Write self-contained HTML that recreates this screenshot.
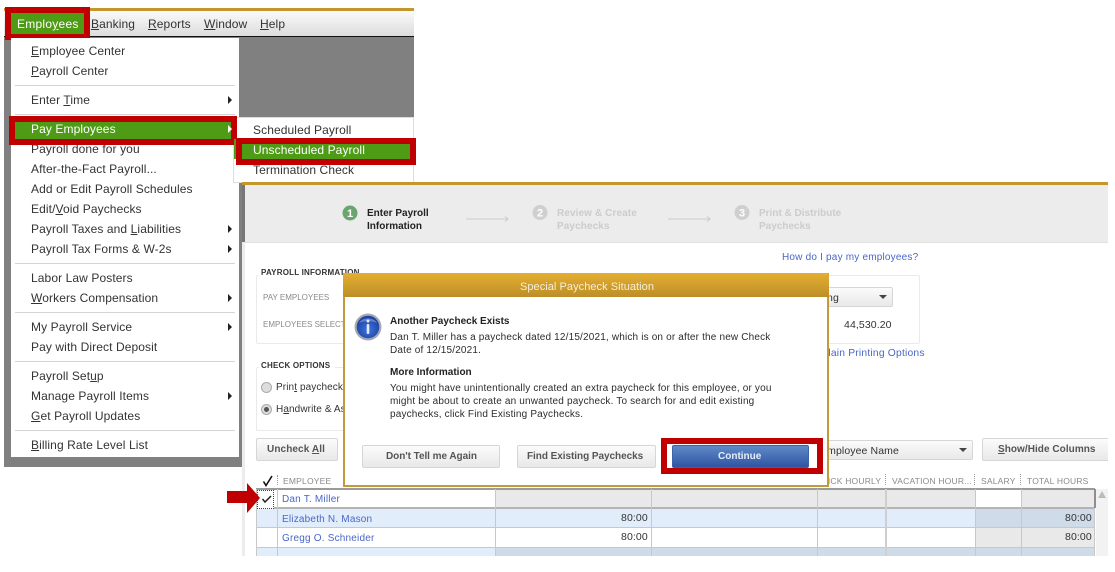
<!DOCTYPE html>
<html><head><meta charset="utf-8">
<style>
html,body{margin:0;padding:0;background:#fff;}
#p{position:relative;width:1115px;height:572px;overflow:hidden;background:#fff;font-family:"Liberation Sans",sans-serif;filter:blur(.3px);}
#p div,#p span.t{position:absolute;}
.t{white-space:nowrap;line-height:14px;transform:translateY(-6px);}
.m{font-size:12px;color:#333;letter-spacing:.1px;left:31px;transform:translateY(-7px);}
.w{color:#fff;}
.h{font-size:8.5px;color:#8a8a8a;letter-spacing:.2px;}
.h2{font-size:8px;color:#8a8a8a;}
.f{font-size:8px;font-weight:bold;color:#333;letter-spacing:.2px;}
.b{font-weight:bold;font-size:10px;color:#222;}
.g{font-weight:bold;font-size:10px;color:#ccc;}
.d{font-size:10px;color:#2c2c2c;letter-spacing:.17px;left:390px;}
.l{font-size:10px;color:#4a66c8;letter-spacing:.2px;}
.n{font-size:10.5px;color:#333;letter-spacing:.1px;}
.o{font-size:10px;color:#333;letter-spacing:.1px;}
.btn{background:linear-gradient(#fbfbfb,#e8e8e8);border:1px solid #d6d6d6;border-radius:2px;box-sizing:border-box;}
.bt{font-weight:bold;font-size:10px;color:#555;letter-spacing:.1px;}
.bd{font-weight:bold;font-size:10px;color:#555;letter-spacing:-.05px;}
.sep{height:1px;background:#d4d4d4;left:15px;width:220px;}
.tri{width:0;height:0;border-left:4px solid #222;border-top:4px solid transparent;border-bottom:4px solid transparent;left:228px;}
.r{background:#c00000;}
.gr{background:#4e9c16;}
</style></head><body><div id="p">

<!-- top window -->
<div style="left:4px;top:8px;width:410px;height:3px;background:#c5962c"></div>
<div style="left:4px;top:11px;width:410px;height:25px;background:linear-gradient(#fafafa,#dcdcdc)"></div>
<div style="left:4px;top:36px;width:410px;height:1px;background:#111"></div>
<div style="left:4px;top:37px;width:410px;height:145px;background:#808080"></div>
<div style="left:4px;top:182px;width:238px;height:285px;background:#808080"></div>

<!-- menu bar -->
<div class="r" style="left:5px;top:7px;width:85px;height:33px"></div>
<div class="gr" style="left:11px;top:13px;width:73px;height:21px"></div>
<span class="t m w" style="left:17px;top:24px;letter-spacing:.25px">Emplo<u>y</u>ees</span>
<span class="t m" style="left:91px;top:24px;letter-spacing:.1px"><u>B</u>anking</span>
<span class="t m" style="left:148px;top:24px;letter-spacing:.1px"><u>R</u>eports</span>
<span class="t m" style="left:204px;top:24px;letter-spacing:.1px"><u>W</u>indow</span>
<span class="t m" style="left:260px;top:24px;letter-spacing:.1px"><u>H</u>elp</span>

<!-- dropdown -->
<div style="left:11px;top:38px;width:228px;height:419px;background:#fff"></div>
<span class="t m" style="top:51px"><u>E</u>mployee Center</span>
<span class="t m" style="top:71px"><u>P</u>ayroll Center</span>
<div class="sep" style="top:85px"></div>
<span class="t m" style="top:100px">Enter <u>T</u>ime</span>
<div class="tri" style="top:96px"></div>
<div class="sep" style="top:114px"></div>
<span class="t m" style="top:149px">Payroll done for you</span>
<span class="t m" style="top:169px">After-the-Fact Payroll...</span>
<span class="t m" style="top:189px">Add or Edit Payroll Schedules</span>
<span class="t m" style="top:209px">Edit/<u>V</u>oid Paychecks</span>
<span class="t m" style="top:229px">Payroll Taxes and <u>L</u>iabilities</span>
<div class="tri" style="top:225px"></div>
<span class="t m" style="top:249px">Payroll Tax Forms &amp; W-2s</span>
<div class="tri" style="top:245px"></div>
<div class="sep" style="top:263px"></div>
<span class="t m" style="top:278px">Labor Law Posters</span>
<span class="t m" style="top:298px"><u>W</u>orkers Compensation</span>
<div class="tri" style="top:294px"></div>
<div class="sep" style="top:312px"></div>
<span class="t m" style="top:327px">My Payroll Service</span>
<div class="tri" style="top:323px"></div>
<span class="t m" style="top:347px">Pay with Direct Deposit</span>
<div class="sep" style="top:361px"></div>
<span class="t m" style="top:376px">Payroll Set<u>u</u>p</span>
<span class="t m" style="top:396px">Manage Payroll Items</span>
<div class="tri" style="top:392px"></div>
<span class="t m" style="top:416px"><u>G</u>et Payroll Updates</span>
<div class="sep" style="top:430px"></div>
<span class="t m" style="top:445px"><u>B</u>illing Rate Level List</span>

<!-- submenu -->
<div style="left:233px;top:117px;width:181px;height:66px;background:#fff;border:1px solid #ddd;box-sizing:border-box"></div>
<span class="t m" style="left:253px;top:130px">Scheduled Payroll</span>
<span class="t m" style="left:253px;top:170px">Termination Check</span>

<!-- highlighted items -->
<div class="r" style="left:9px;top:116px;width:228px;height:29px"></div>
<div class="gr" style="left:15px;top:122px;width:216px;height:17px"></div>
<span class="t m w" style="top:129px">Pay Employees</span>
<div class="tri" style="top:125px;border-left-color:#fff"></div>
<div class="gr" style="left:234px;top:139px;width:6px;height:20px"></div>
<div class="r" style="left:236px;top:138px;width:180px;height:27px"></div>
<div class="gr" style="left:242px;top:144px;width:168px;height:15px"></div>
<span class="t m w" style="left:253px;top:150px">Unscheduled Payroll</span>

<!-- bottom panel -->
<div style="left:242px;top:182px;width:866px;height:374px;background:#fff"></div>
<div style="left:242px;top:182px;width:866px;height:3px;background:#c5962c"></div>
<div style="left:242px;top:185px;width:3px;height:57px;background:#777"></div>
<div style="left:242px;top:242px;width:3px;height:314px;background:#ececec"></div>
<div style="left:245px;top:185px;width:863px;height:57px;background:#ececec"></div>
<div style="left:245px;top:242px;width:863px;height:1px;background:#e0e0e0"></div>

<!-- steps -->
<svg style="position:absolute;left:0;top:0" width="1115" height="572">
<circle cx="350" cy="213" r="7.5" fill="#6ba56e"/>
<circle cx="540" cy="212.500" r="7.500" fill="#cfcfcf"/>
<circle cx="742" cy="212.500" r="7.500" fill="#cfcfcf"/>
<g stroke="#cbcbcb" stroke-width="1" fill="none">
<path d="M466 219H508M505 216.500L508 219L505 221.500"/>
<path d="M668 219H710M707 216.500L710 219L707 221.500"/>
</g>
<text x="350" y="217" font-family="Liberation Sans" font-size="11" font-weight="bold" fill="#fff" text-anchor="middle">1</text>
<text x="540" y="216.500" font-family="Liberation Sans" font-size="11" font-weight="bold" fill="#fff" text-anchor="middle">2</text>
<text x="742" y="216.500" font-family="Liberation Sans" font-size="11" font-weight="bold" fill="#fff" text-anchor="middle">3</text>
</svg>
<span class="t b" style="left:367px;top:213px">Enter Payroll</span>
<span class="t b" style="left:367px;top:226px">Information</span>
<span class="t g" style="left:557px;top:213px;letter-spacing:.1px">Review &amp; Create</span>
<span class="t g" style="left:557px;top:226px;letter-spacing:.1px">Paychecks</span>
<span class="t g" style="left:759px;top:213px">Print &amp; Distribute</span>
<span class="t g" style="left:759px;top:226px">Paychecks</span>

<span class="t l" style="left:782px;top:257px">How do I pay my employees?</span>

<!-- fieldsets -->
<div style="left:256px;top:275px;width:664px;height:69px;border:1px solid #eaeaea;border-radius:2px;box-sizing:border-box"></div>
<div style="left:256px;top:367px;width:400px;height:64px;border:1px solid #eaeaea;border-radius:2px;box-sizing:border-box"></div>
<div style="left:259px;top:268px;width:104px;height:9px;background:#fff"></div>
<span class="t f" style="left:261px;top:272px">PAYROLL INFORMATION</span>
<div style="left:259px;top:361px;width:76px;height:9px;background:#fff"></div>
<span class="t f" style="left:261px;top:365px">CHECK OPTIONS</span>
<span class="t h2" style="left:263px;top:297px">PAY EMPLOYEES</span>
<span class="t h2" style="left:263px;top:324px">EMPLOYEES SELECTED</span>
<div style="left:261px;top:382px;width:9px;height:9px;border-radius:50%;background:#ddd;border:1px solid #aaa"></div>
<div style="left:261px;top:404px;width:9px;height:9px;border-radius:50%;background:#ddd;border:1px solid #aaa"></div>
<div style="left:264px;top:407px;width:5px;height:5px;border-radius:50%;background:#555"></div>
<span class="t o" style="left:276px;top:387px">Prin<u>t</u> paychecks</span>
<span class="t o" style="left:276px;top:409px">H<u>a</u>ndwrite &amp; Assign</span>

<div class="btn" style="left:780px;top:287px;width:113px;height:20px"></div>
<span class="t n" style="left:827px;top:297px">ng</span>
<div style="left:879px;top:295px;width:0;height:0;border-top:4px solid #444;border-left:4px solid transparent;border-right:4px solid transparent"></div>
<span class="t n" style="left:844px;top:324px">44,530.20</span>
<span class="t l" style="left:810px;top:353px;font-size:10.3px">Explain Printing Options</span>

<!-- buttons row -->
<div class="btn" style="left:256px;top:438px;width:82px;height:23px"></div>
<span class="t bt" style="left:267px;top:449px">Uncheck <u>A</u>ll</span>
<div class="btn" style="left:790px;top:440px;width:183px;height:20px"></div>
<span class="t n" style="left:820px;top:449.500px">Employee Name</span>
<div style="left:959px;top:448px;width:0;height:0;border-top:4px solid #444;border-left:4px solid transparent;border-right:4px solid transparent"></div>
<div class="btn" style="left:982px;top:438px;width:126px;height:23px;border-right:0;border-radius:2px 0 0 2px"></div>
<span class="t bt" style="left:998px;top:449px;letter-spacing:.05px"><u>S</u>how/Hide Columns</span>

<!-- table header -->
<svg style="position:absolute;left:262px;top:475px" width="12" height="12"><path d="M1.500 6.500L4 10.500L10 1" stroke="#111" stroke-width="1.600" fill="none"/></svg>
<span class="t h" style="left:283px;top:480px">EMPLOYEE</span>
<span class="t h" style="left:822px;top:480px">SICK HOURLY</span>
<span class="t h" style="left:892px;top:480px">VACATION HOUR...</span>
<span class="t h" style="left:981px;top:480px">SALARY</span>
<span class="t h" style="left:1027px;top:480px">TOTAL HOURS</span>
<div style="left:277px;top:475px;width:0;height:10px;border-left:1px dotted #999"></div>
<div style="left:885px;top:474px;width:0;height:11px;border-left:1px dotted #999"></div>
<div style="left:974px;top:474px;width:0;height:11px;border-left:1px dotted #999"></div>
<div style="left:1020px;top:474px;width:0;height:11px;border-left:1px dotted #999"></div>

<!-- table -->
<div style="left:256px;top:489px;width:239px;height:19px;background:#fff"></div>
<div style="left:495px;top:489px;width:480px;height:19px;background:#e9e9e9"></div>
<div style="left:1021px;top:489px;width:74px;height:19px;background:#e9e9e9"></div>
<div style="left:256px;top:508px;width:719px;height:20px;background:#e2edfb"></div>
<div style="left:975px;top:508px;width:120px;height:20px;background:#cfdbe9"></div>
<div style="left:975px;top:528px;width:120px;height:19px;background:#e9e9e9"></div>
<div style="left:256px;top:547px;width:239px;height:9px;background:#e2edfb"></div>
<div style="left:495px;top:547px;width:600px;height:9px;background:#cfdbe9"></div>
<div style="left:256px;top:488px;width:839px;height:2px;background:#9a9a9a"></div>
<div style="left:256px;top:507px;width:839px;height:2px;background:#b4b4b4"></div>
<div style="left:256px;top:527px;width:839px;height:1px;background:#c8c8c8"></div>
<div style="left:256px;top:547px;width:839px;height:1px;background:#c8c8c8"></div>
<div style="left:256px;top:489px;width:1px;height:67px;background:#c8c8c8"></div>
<div style="left:277px;top:489px;width:1px;height:67px;background:#c8c8c8"></div>
<div style="left:495px;top:489px;width:1px;height:67px;background:#c8c8c8"></div>
<div style="left:651px;top:489px;width:1px;height:67px;background:#c8c8c8"></div>
<div style="left:817px;top:489px;width:1px;height:67px;background:#c8c8c8"></div>
<div style="left:885px;top:489px;width:2px;height:67px;background:#cfcfcf"></div>
<div style="left:975px;top:489px;width:1px;height:67px;background:#c8c8c8"></div>
<div style="left:1021px;top:489px;width:1px;height:67px;background:#c8c8c8"></div>
<div style="left:1094px;top:489px;width:1px;height:67px;background:#c8c8c8"></div>
<div style="left:1094px;top:489px;width:2px;height:19px;background:#8f8f8f"></div>
<div style="left:1096px;top:489px;width:12px;height:67px;background:#f2f2f2"></div>
<div style="left:1098px;top:491px;width:0;height:0;border-bottom:7px solid #bbb;border-left:4px solid transparent;border-right:4px solid transparent"></div>
<div style="left:257px;top:490px;width:15px;height:17px;border:1px dotted #444;background:#fff"></div>
<svg style="position:absolute;left:261px;top:494px" width="12" height="10"><path d="M1.500 5L4 8L10 2" stroke="#222" stroke-width="1.500" fill="none"/></svg>
<span class="t l" style="left:282px;top:499px">Dan T. Miller</span>
<span class="t l" style="left:282px;top:519px">Elizabeth N. Mason</span>
<span class="t l" style="left:282px;top:538px">Gregg O. Schneider</span>
<span class="t n" style="left:621px;top:517px">80:00</span>
<span class="t n" style="left:621px;top:536px">80:00</span>
<span class="t n" style="left:1065px;top:517px">80:00</span>
<span class="t n" style="left:1065px;top:536px">80:00</span>

<!-- red arrow -->
<svg style="position:absolute;left:227px;top:483px" width="34" height="30"><path d="M0 8H20V0L33 15L20 30V20H0Z" fill="#c00000"/></svg>

<!-- dialog -->
<div style="left:343px;top:273px;width:486px;height:214px;background:#fff;border:2px solid #c29a38;border-top:0;box-sizing:border-box"></div>
<div style="left:343px;top:273px;width:486px;height:24px;background:linear-gradient(#e4ae30,#bd8e28);border-radius:2px 2px 0 0"></div>
<span class="t" style="left:520px;top:286px;font-size:11px;color:#f6eed8;letter-spacing:.05px">Special Paycheck Situation</span>
<svg style="position:absolute;left:354px;top:313px" width="28" height="28">
<defs><radialGradient id="a" cx="50%" cy="60%" r="60%"><stop offset="0" stop-color="#3f74e0"/><stop offset="1" stop-color="#1c3f9c"/></radialGradient></defs>
<circle cx="14" cy="14" r="13.500" fill="#a5a9b2"/>
<circle cx="14" cy="14" r="11.300" fill="url(#a)"/>
<path d="M5 10A10 8 0 0 1 23 10Q14 6 5 10Z" fill="#8ea9e4" opacity=".6"/>
<circle cx="14" cy="8" r="1.500" fill="#e4eafa"/>
<rect x="12.700" y="11" width="2.600" height="10" rx="1" fill="#e4eafa"/>
</svg>
<span class="t b" style="left:390px;top:320.500px">Another Paycheck Exists</span>
<span class="t d" style="top:337px">Dan T. Miller has a paycheck dated 12/15/2021, which is on or after the new Check</span>
<span class="t d" style="top:350px">Date of 12/15/2021.</span>
<span class="t b" style="left:390px;top:371.500px">More Information</span>
<span class="t d" style="top:388px">You might have unintentionally created an extra paycheck for this employee, or you</span>
<span class="t d" style="top:401px">might be about to create an unwanted paycheck. To search for and edit existing</span>
<span class="t d" style="top:414px">paychecks, click Find Existing Paychecks.</span>
<div class="btn" style="left:362px;top:445px;width:138px;height:23px"></div>
<span class="t bd" style="left:386px;top:456px">Don't Tell me Again</span>
<div class="btn" style="left:517px;top:445px;width:139px;height:23px"></div>
<span class="t bd" style="left:527px;top:456px">Find Existing Paychecks</span>
<div class="r" style="left:661px;top:438px;width:162px;height:36px"></div>
<div style="left:667px;top:444px;width:150px;height:24px;background:#fff"></div>
<div style="left:672px;top:445px;width:137px;height:23px;background:linear-gradient(#5f8ac6,#2f55a3);border:1px solid #3c62a8;box-sizing:border-box;border-radius:2px"></div>
<span class="t" style="left:718px;top:456px;font-size:10px;font-weight:bold;color:#e6eefa">Continue</span>

</div></body></html>
